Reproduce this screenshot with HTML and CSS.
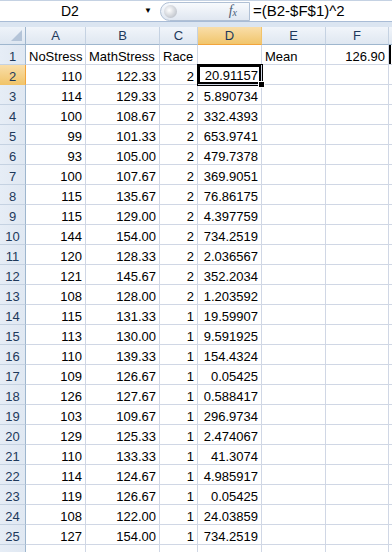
FILE: index.html
```html
<!DOCTYPE html>
<html>
<head>
<meta charset="utf-8">
<link rel="stylesheet" href="styles.css">
</head>
<body>
<div class="app">
  <div class="fbar">
    <div class="namebox"><span class="name">D2</span><span class="dd">&#9660;</span></div>
    <div class="pill">
      <span class="knob"></span>
      <span class="fx">f<sub>x</sub></span>
    </div>
    <div class="formula">=(B2-$F$1)^2</div>
  </div>
  <div class="band"></div>
  <div class="grid" id="grid">
    <div class="corner"><span class="tri"></span></div>
    <div class="ch">A</div><div class="ch">B</div><div class="ch">C</div><div class="ch sel">D</div><div class="ch">E</div><div class="ch">F</div><div class="ch last"></div>

    <div class="rh">1</div><div class="c">NoStress</div><div class="c">MathStress</div><div class="c">Race</div><div class="c"></div><div class="c">Mean</div><div class="c r">126.90</div><div class="c last edge"></div>
  </div>
</div>
<script>
var rows=[
[110,"122.33",2,"20.91157"],[114,"129.33",2,"5.890734"],[100,"108.67",2,"332.4393"],[99,"101.33",2,"653.9741"],
[93,"105.00",2,"479.7378"],[100,"107.67",2,"369.9051"],[115,"135.67",2,"76.86175"],[115,"129.00",2,"4.397759"],
[144,"154.00",2,"734.2519"],[120,"128.33",2,"2.036567"],[121,"145.67",2,"352.2034"],[108,"128.00",2,"1.203592"],
[115,"131.33",1,"19.59907"],[113,"130.00",1,"9.591925"],[110,"139.33",1,"154.4324"],[109,"126.67",1,"0.05425"],
[126,"127.67",1,"0.588417"],[103,"109.67",1,"296.9734"],[129,"125.33",1,"2.474067"],[110,"133.33",1,"41.3074"],
[114,"124.67",1,"4.985917"],[119,"126.67",1,"0.05425"],[108,"122.00",1,"24.03859"],[127,"154.00",1,"734.2519"]];
var g=document.getElementById('grid'),h='';
rows.forEach(function(r,i){
  var n=i+2;
  h+='<div class="rh'+(n===2?' sel':'')+'">'+n+'</div>';
  h+='<div class="c r">'+r[0]+'</div><div class="c r">'+r[1]+'</div><div class="c r">'+r[2]+'</div>';
  h+='<div class="c r'+(n===2?' active':'')+'">'+r[3]+(n===2?'<span class="handle"></span>':'')+'</div>';
  h+='<div class="c"></div><div class="c"></div><div class="c last"></div>';
});
h+='<div class="rh"></div><div class="c"></div><div class="c"></div><div class="c"></div><div class="c"></div><div class="c"></div><div class="c"></div><div class="c last"></div>';
g.insertAdjacentHTML('beforeend',h);
</script>
</body>
</html>
```
FILE: styles.css
```css
html,body{margin:0;padding:0;background:#fff;}
body{font-family:"Liberation Sans",Arial,sans-serif;font-size:13px;color:#000;width:392px;height:552px;overflow:hidden;}
.app{width:392px;}
.fbar{height:22px;display:flex;align-items:center;background:#fff;border-top:1px solid #c5d2e3;border-bottom:1px solid #a9bcd6;box-sizing:border-box;}
.namebox{width:158px;height:21px;display:flex;align-items:center;position:relative;box-sizing:border-box;}
.name{position:absolute;left:61px;top:2px;font-size:14px;}
.dd{position:absolute;left:144px;top:5px;font-size:8px;color:#000;}
.pill{width:90px;height:19px;margin-left:2px;border:1px solid #b0c0d5;border-radius:10px 0 0 10px;background:linear-gradient(#f8fafd,#e0e7f1);display:flex;align-items:center;box-sizing:border-box;position:relative;}
.knob{width:13px;height:13px;border-radius:50%;background:radial-gradient(circle at 40% 40%,#fff,#c8ccd3 65%,#a3a9b2);margin-left:3px;}
.fx{position:absolute;right:12px;top:0px;font-family:"Liberation Serif",serif;font-style:italic;font-size:14px;color:#4a5d78;}
.fx sub{font-size:10px;vertical-align:-1px;}
.formula{margin-left:1px;padding-left:2px;font-size:15px;height:21px;line-height:20px;flex:1;}
.band{height:5px;background:#dbe5f1;}
.grid{display:grid;grid-template-columns:26px 60px 74px 38px 64px 64px 63px 3px;grid-auto-rows:20px;grid-template-rows:18px;}
.corner{background:linear-gradient(#eef3f9,#dde6f1);border-right:1px solid #9eb6ce;border-bottom:1px solid #9eb6ce;box-sizing:border-box;position:relative;}
.tri{position:absolute;right:3px;bottom:3px;width:0;height:0;border-left:11px solid transparent;border-bottom:11px solid #b4c4d8;}
.ch{background:linear-gradient(#f1f5fa,#dfe7f1);border-right:1px solid #c5d2e2;border-bottom:1px solid #9eb6ce;box-sizing:border-box;text-align:center;line-height:17px;color:#1e395b;font-size:13px;}
.ch.sel{background:linear-gradient(#f9dea9,#f1c56c);border-right-color:#f2c36a;border-bottom-color:#f2a43c;}
.ch.last{border-right:none;}
.rh{background:linear-gradient(90deg,#e6edf6,#e0e8f2);border-right:1px solid #9eb6ce;border-bottom:1px solid #c5d2e2;box-sizing:border-box;text-align:center;line-height:23px;color:#1e395b;font-size:13px;}
.rh.sel{background:linear-gradient(#f9dea9,#f1c56c);border-right-color:#f2a43c;border-bottom-color:#f2c36a;}
.c{border-right:1px solid #d0d7e5;border-bottom:1px solid #d0d7e5;box-sizing:border-box;padding:0 3px;line-height:23px;white-space:nowrap;overflow:visible;position:relative;}
.c.r{text-align:right;}
.c.last{border-right:none;padding:0;}
.active{box-shadow:inset 0 0 0 2px #000;outline:1px solid #000;outline-offset:0;z-index:2;line-height:22px;}
.handle{position:absolute;right:-4px;bottom:-4px;width:5px;height:5px;background:#000;border:1px solid #fff;}
.edge{box-shadow:inset 2px 0 0 #000;}
```
